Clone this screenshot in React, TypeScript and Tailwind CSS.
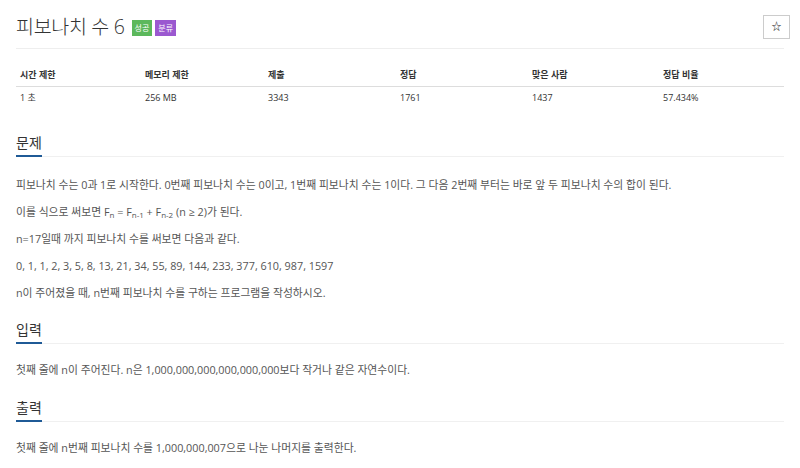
const stats = [
  { label: '시간 제한', value: '1 초', w: 'w-[125px]' },
  { label: '메모리 제한', value: '256 MB', w: 'w-[123px]' },
  { label: '제출', value: '3343', w: 'w-[132px]' },
  { label: '정답', value: '1761', w: 'w-[132px]' },
  { label: '맞은 사람', value: '1437', w: 'w-[131px]' },
  { label: '정답 비율', value: '57.434%', w: 'w-[125px]' },
]

function Headline({ title }: { title: string }) {
  return (
    <div className="border-b border-[#f0f0f0]">
      <h2 className="-mb-px inline-block border-b-2 border-[#1f5a96] pb-[2px] text-[14px] leading-[20px] text-[#333]">
        {title}
      </h2>
    </div>
  )
}

export default function App() {
  return (
    <div
      className="min-h-[468px] bg-white px-4 text-[#555]"
      style={{ fontFamily: '"Open Sans", "Noto Sans CJK KR", sans-serif' }}
    >
      {/* 제목 */}
      <div className="flex h-[49px] items-center justify-between border-b border-[#eee] pt-[5px]">
        <div className="flex items-center gap-[3px]">
          <h1 className="mr-[4px] text-[19.5px] font-light leading-none tracking-[-0.3px] text-[#333]">
            피보나치 수 6
          </h1>
          <span className="mt-[2px] h-[16px] bg-[#5cb85c] px-[3px] text-[8px] leading-[16px] text-white">성공</span>
          <span className="mt-[2px] h-[16px] bg-[#9b59d0] px-[3px] text-[8px] leading-[16px] text-white">분류</span>
        </div>
        <button className="mr-[-6px] flex h-[24px] w-[27px] items-center justify-center border border-[#ccc] bg-white text-[10px] text-[#222]">
          ☆
        </button>
      </div>

      {/* 제한 정보 */}
      <table className="mt-[13px] w-full table-fixed text-left text-[9px]">
        <colgroup>
          {stats.map((s) => (
            <col key={s.label} className={s.w} />
          ))}
        </colgroup>
        <thead>
          <tr className="border-b border-[#ddd]">
            {stats.map((s) => (
              <th key={s.label} className="px-1 pt-[6px] pb-[5px] font-bold leading-[13px] text-[#333]">
                {s.label}
              </th>
            ))}
          </tr>
        </thead>
        <tbody>
          <tr>
            {stats.map((s) => (
              <td key={s.label} className="px-1 py-[4px] leading-[13px] text-[#333]">
                {s.value}
              </td>
            ))}
          </tr>
        </tbody>
      </table>

      {/* 문제 */}
      <section className="mt-[22px]">
        <Headline title="문제" />
        <div className="mt-[19px] space-y-[10px] text-[10.8px] leading-[17px]">
          <p>
            피보나치 수는 0과 1로 시작한다. 0번째 피보나치 수는 0이고, 1번째 피보나치 수는 1이다. 그 다음 2번째
            부터는 바로 앞 두 피보나치 수의 합이 된다.
          </p>
          <p>
            이를 식으로 써보면 F<sub className="text-[8px]">n</sub> = F<sub className="text-[8px]">n-1</sub> + F
            <sub className="text-[8px]">n-2</sub> (n ≥ 2)가 된다.
          </p>
          <p>n=17일때 까지 피보나치 수를 써보면 다음과 같다.</p>
          <p>0, 1, 1, 2, 3, 5, 8, 13, 21, 34, 55, 89, 144, 233, 377, 610, 987, 1597</p>
          <p>n이 주어졌을 때, n번째 피보나치 수를 구하는 프로그램을 작성하시오.</p>
        </div>
      </section>

      {/* 입력 */}
      <section className="mt-[16px]">
        <Headline title="입력" />
        <p className="mt-[17px] text-[10.8px] leading-[17px]">
          첫째 줄에 n이 주어진다. n은 1,000,000,000,000,000,000보다 작거나 같은 자연수이다.
        </p>
      </section>

      {/* 출력 */}
      <section className="mt-[17px]">
        <Headline title="출력" />
        <p className="mt-[17px] text-[10.8px] leading-[17px]">
          첫째 줄에 n번째 피보나치 수를 1,000,000,007으로 나눈 나머지를 출력한다.
        </p>
      </section>
    </div>
  )
}
